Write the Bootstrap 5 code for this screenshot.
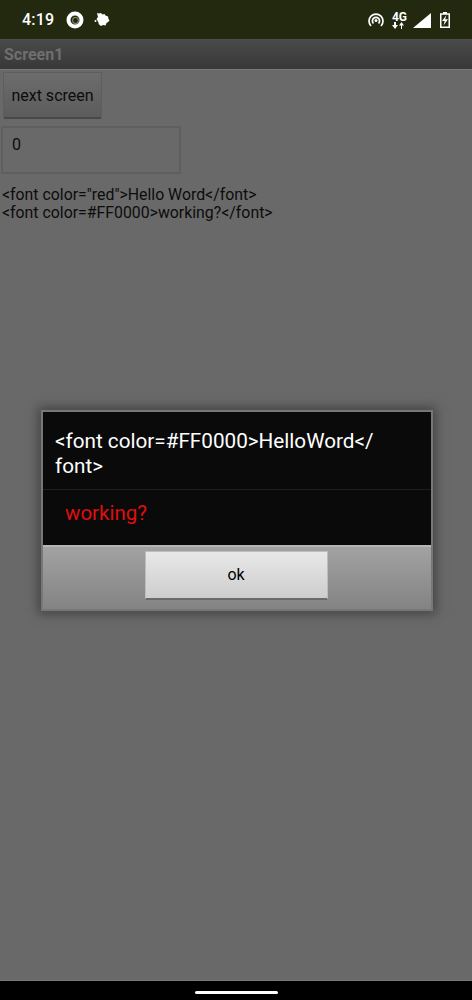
<!DOCTYPE html>
<html lang="en">
<head>
<meta charset="utf-8">
<title>Screen1</title>
<link rel="stylesheet" href="https://cdn.jsdelivr.net/npm/bootstrap@5.3.0/dist/css/bootstrap.min.css">
<style>
html,body{height:1000px;overflow:hidden}
body{font-family:Roboto,"Liberation Sans",sans-serif;background:#000;width:472px;position:relative}
.stat-bar{height:39px;background:#23290f;color:#fff;padding:1px 22px 0 22px}
.stat-time{font-size:16px;font-weight:500;letter-spacing:.2px;width:44px}
.stat-icon-b{margin-left:10px}
.stat-net{font-size:12px;font-weight:700;line-height:10px;width:14px;text-align:center;margin-left:8px;letter-spacing:-.2px}
.stat-sig{margin-left:7px}
.stat-batt{margin-left:9px}
.title-strip{height:31px;background:linear-gradient(#4a4a4a,#383838);border-top:1px solid #4f4f4f;border-bottom:1px solid #7a7a7a;color:#6f6f6f;font-size:16px;font-weight:700;padding-left:4px;line-height:29px}
.app-area{height:911px;background:#696969;color:#0c0c0c;font-size:16px;padding-top:2px;border-bottom:1px solid #777}
.next-btn{width:99px;height:47px;margin-left:3px;background:linear-gradient(#6c6c6c,#5c5c5c);border:1px solid #5e5e5e;border-bottom:2px solid #484848;border-radius:2px;font-size:16px;color:#0c0c0c;padding:2px 0 0}
.num-box{width:180px;height:48px;margin:7px 0 0 1px;border:2px solid #5f5f5f;padding:7px 9px;line-height:20px}
.raw-lines{margin:12px 0 0 2px;line-height:18px;font-size:15.85px;white-space:nowrap}
.nav-strip{height:19px;background:#000}
.nav-pill{width:83px;height:3px;background:#fff;border-radius:2px;margin-top:10px}
.alert-box{position:absolute;left:41px;top:410px;width:392px;height:201px;background:#0a0a0a;border:2px solid #777;box-shadow:0 0 10px 3px #444}
.alert-title{height:78px;color:#fff;font-size:20.7px;line-height:25px;padding:17px 10px 0 12px;border-bottom:1px solid #1e1e1e;white-space:nowrap}
.alert-msg{height:55px;color:#e00e0e;font-size:20.5px;padding:10px 0 0 22px;line-height:26px}
.alert-foot{height:64px;background:linear-gradient(#a2a2a2,#838383);border-top:2px solid #b5b5b5;padding:4px 2px 0 0}
.ok-btn{width:183px;height:49px;background:linear-gradient(#e8e8e8,#cdcdcd);border:1px solid #bdbdbd;border-bottom:2px solid #6a6a6a;border-radius:1px;color:#000;font-size:16px;padding:0}
</style>
</head>
<body>
<div class="stat-bar d-flex align-items-center">
  <span class="stat-time">4:19</span>
  <svg width="18" height="18" viewBox="0 0 18 18"><circle cx="9" cy="9" r="6.500" fill="none" stroke="#fff" stroke-width="4"/><circle cx="9.500" cy="9.500" r="3.400" fill="#8b8f80"/><circle cx="9.500" cy="9.500" r="2.400" fill="#23290f"/></svg>
  <svg width="16" height="16" viewBox="0 0 16 16" class="stat-icon-b"><path d="M3 1l2 .5L7 1l1.500 1.500 2-.5 1 1.500 2.500 1 .5 2.500 1 1.500-1.500 1.500-1.500 1-1 2.500-2.500-.5-2 1-2-1.500-1-3L2.500 7 4 5z" fill="#fff"/><circle cx="1.500" cy="9" r="1" fill="#fff"/></svg>
  <div class="ms-auto d-flex align-items-center">
    <svg width="16" height="14" viewBox="0 0 16 14"><g fill="none" stroke="#fff" stroke-width="1.700"><path d="M3 13a7 7 0 1 1 10 0"/><path d="M5.500 10.500a3.600 3.600 0 1 1 5 0"/></g><circle cx="8" cy="7.500" r="1.500" fill="#fff"/></svg>
    <div class="stat-net"><div>4G</div><svg width="14" height="7" viewBox="0 0 14 7" class="d-block"><path d="M2 0v3H0l3 4 3-4H4V0zM10 7V3.500h2L9.500 0 7 3.500h2V7h1z" fill="#fff"/></svg></div>
    <svg width="18" height="15" viewBox="0 0 18 15" class="stat-sig"><path d="M0 15L18 0v15z" fill="#fff"/></svg>
    <svg width="10" height="16" viewBox="0 0 10 16" class="stat-batt"><path fill-rule="evenodd" d="M3 0h4v1.200h3V16H0V1.200h3zM1.500 2.700v11.800h7V2.700z" fill="#fff"/><path d="M6.500 3L2 9h2.700l-1.200 4.500L8 7.200H5.200z" fill="#fff"/></svg>
  </div>
</div>
<div class="title-strip">Screen1</div>
<div class="app-area">
  <button type="button" class="next-btn d-block">next screen</button>
  <div class="num-box">0</div>
  <div class="raw-lines">&lt;font color="red"&gt;Hello Word&lt;/font&gt;<br>&lt;font color=#FF0000&gt;working?&lt;/font&gt;</div>
</div>
<div class="nav-strip d-flex justify-content-center"><div class="nav-pill"></div></div>
<div class="alert-box d-flex flex-column" role="dialog">
  <div class="alert-title">&lt;font color=#FF0000&gt;HelloWord&lt;/<br>font&gt;</div>
  <div class="alert-msg">working?</div>
  <div class="alert-foot d-flex justify-content-center"><button type="button" class="ok-btn">ok</button></div>
</div>
<script src="https://cdn.jsdelivr.net/npm/bootstrap@5.3.0/dist/js/bootstrap.bundle.min.js"></script>
</body>
</html>
